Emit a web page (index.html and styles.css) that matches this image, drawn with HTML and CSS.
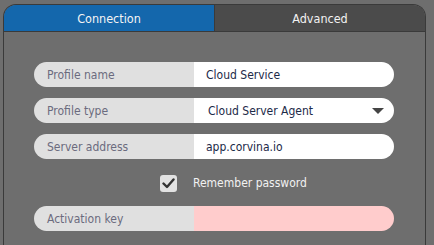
FILE: index.html
```html
<!DOCTYPE html>
<html>
<head>
<meta charset="utf-8">
<link rel="stylesheet" href="styles.css">
</head>
<body>
<div class="frame">
  <div class="tabs">
    <div class="tab active">Connection</div>
    <div class="tab">Advanced</div>
  </div>
  <div class="content">
    <div class="field">
      <div class="label">Profile name</div>
      <div class="value">Cloud Service</div>
    </div>
    <div class="field">
      <div class="label">Profile type</div>
      <div class="value select">Cloud Server Agent<span class="arrow"></span></div>
    </div>
    <div class="field">
      <div class="label">Server address</div>
      <div class="value">app.corvina.io</div>
    </div>
    <div class="check-row">
      <span class="checkbox">
        <svg width="13" height="11" viewBox="0 0 13 11"><path d="M1.5 5.5 L5 9 L11.5 1.5" fill="none" stroke="#333" stroke-width="2.4" stroke-linecap="round" stroke-linejoin="round"/></svg>
      </span>
      <span class="check-label">Remember password</span>
    </div>
    <div class="field">
      <div class="label">Activation key</div>
      <div class="value error"></div>
    </div>
  </div>
</div>
</body>
</html>
```
FILE: styles.css
```css
html, body {
  margin: 0;
  padding: 0;
  background: #6e6e6e;
  font-family: "DejaVu Sans Condensed", "DejaVu Sans", sans-serif;
  font-size: 12px;
  overflow: hidden;
}
.frame {
  margin: 4px 0 0 3px;
  width: 421px;
  height: 241px;
  border: 1px solid #3a3a3a;
  border-bottom: none;
  border-radius: 13px 13px 0 0;
  overflow: hidden;
  box-sizing: content-box;
}
.tabs {
  display: flex;
  height: 26px;
  border-bottom: 1px solid #3a3a3a;
}
.tab {
  display: flex;
  align-items: center;
  justify-content: center;
  color: #f2f2f2;
  font-size: 12.5px;
  flex: 1;
  background: #4b4b4b;
}
.tab.active {
  flex: 0 0 210px;
  background: #1467ac;
  border-right: 1px solid #3a3a3a;
  color: #f4f4f4;
}
.content {
  padding: 30px 0 0 30px;
  display: flex;
  flex-direction: column;
}
.field {
  display: flex;
  width: 360px;
  height: 25px;
  border-radius: 13px;
  overflow: hidden;
  margin-bottom: 11px;
}
.label {
  flex: 0 0 160px;
  background: #e0e0e0;
  color: #6b6b7e;
  display: flex;
  align-items: center;
  padding-left: 13px;
  box-sizing: border-box;
}
.value {
  flex: 1;
  background: #ffffff;
  color: #1c2a48;
  display: flex;
  align-items: center;
  padding-left: 12px;
  position: relative;
}
.value.select {
  padding-left: 14px;
}
.value.error {
  background: #ffcccc;
}
.arrow {
  position: absolute;
  right: 10px;
  top: 10px;
  width: 0;
  height: 0;
  border-left: 6px solid transparent;
  border-right: 6px solid transparent;
  border-top: 6px solid #444;
}
.check-row {
  display: flex;
  align-items: center;
  height: 18px;
  margin: 4px 0 14px 126px;
}
.checkbox {
  width: 17px;
  height: 17px;
  border-radius: 3px;
  background: #e2e2e2;
  display: flex;
  align-items: center;
  justify-content: center;
}
.check-label {
  margin-left: 16px;
  color: #f2f2f2;
}
```
